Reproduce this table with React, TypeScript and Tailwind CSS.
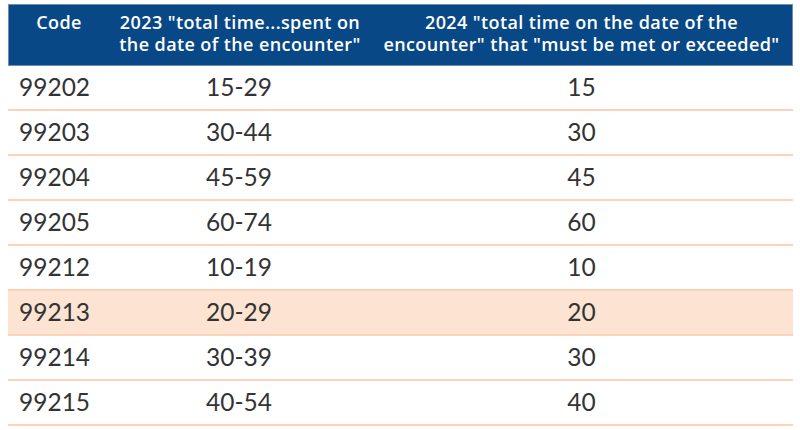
const rows = [
  { code: '99202', y2023: '15-29', y2024: '15' },
  { code: '99203', y2023: '30-44', y2024: '30' },
  { code: '99204', y2023: '45-59', y2024: '45' },
  { code: '99205', y2023: '60-74', y2024: '60' },
  { code: '99212', y2023: '10-19', y2024: '10' },
  { code: '99213', y2023: '20-29', y2024: '20', highlight: true },
  { code: '99214', y2023: '30-39', y2024: '30' },
  { code: '99215', y2023: '40-54', y2024: '40' },
]

export default function App() {
  return (
    <div
      className="w-[800px] h-[430px] bg-white pt-[4px] px-[8px] overflow-hidden"
      style={{ fontFamily: 'Lato, "Open Sans", sans-serif' }}
    >
      <div className="w-[785px]">
        <div
          className="grid grid-cols-[100px_262px_1fr] h-[62px] pt-[6px] bg-[#094886] text-white text-[18px] font-semibold leading-[22px] tracking-[0.4px] items-start border border-[#6f8fb0]"
          style={{ fontFamily: '"Open Sans", sans-serif' }}
        >
          <div className="text-center">Code</div>
          <div className="text-center">
            2023 "total time...spent on
            <br />
            the date of the encounter"
          </div>
          <div className="text-center">
            2024 "total time on the date of the
            <br />
            encounter" that "must be met or exceeded"
          </div>
        </div>
        {rows.map(r => (
          <div
            key={r.code}
            className={`grid grid-cols-[100px_262px_1fr] h-[45px] items-center border-b-2 border-[#fcd3b8] text-[24.5px] text-[#333333] ${
              r.highlight ? 'bg-[#fde3d2]' : 'bg-white'
            }`}
          >
            <div className="pl-[11px]">{r.code}</div>
            <div className="text-center">{r.y2023}</div>
            <div className="text-center">{r.y2024}</div>
          </div>
        ))}
      </div>
    </div>
  )
}
